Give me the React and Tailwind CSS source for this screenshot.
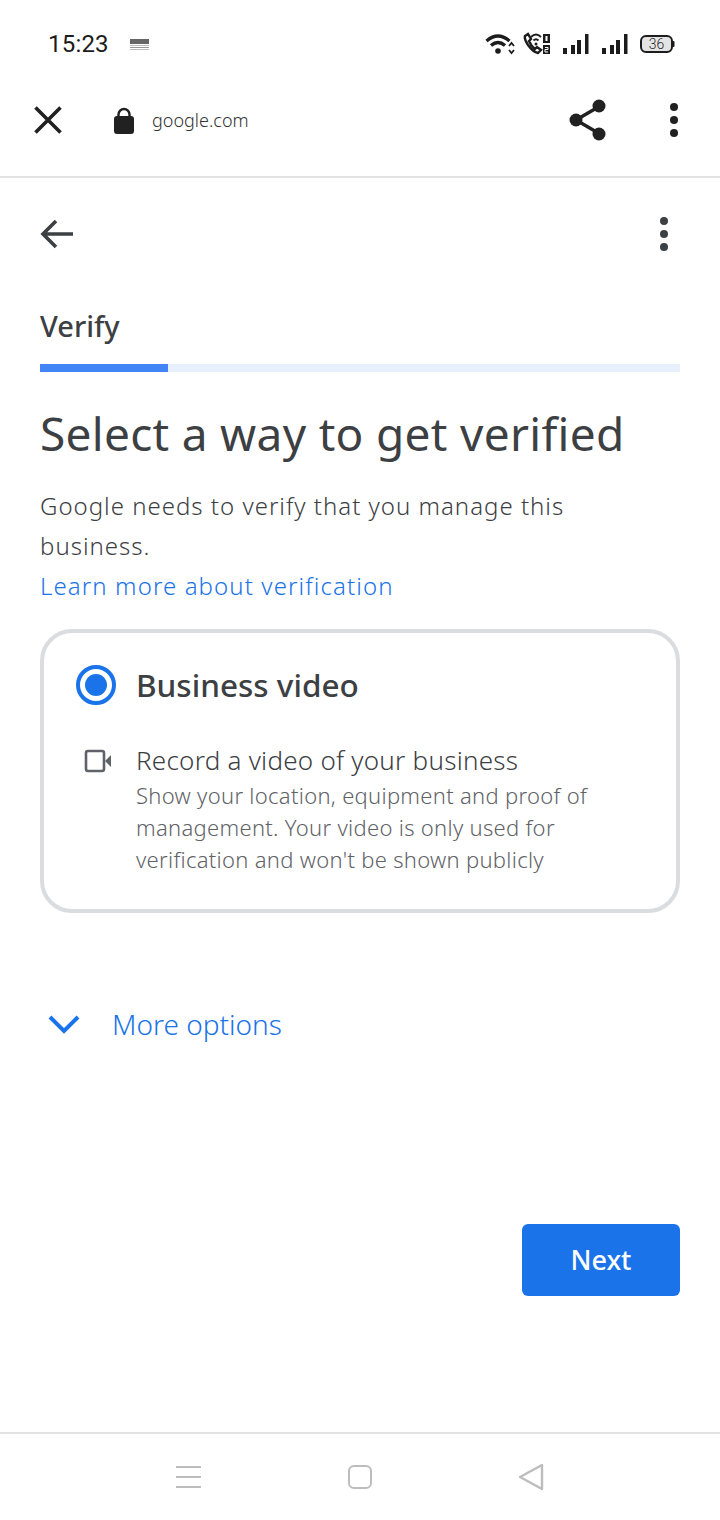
import React from 'react';

const hand = 'font-["Noto_Sans",sans-serif] font-light';
const head = 'font-["Noto_Sans",sans-serif]';

const StatusIcons = () => (
  <div className="flex items-center">
    <svg width="30" height="22" viewBox="0 0 30 22" className="mr-[8px]">
      <path d="M1.500 8 Q13 -2 24.500 8" fill="none" stroke="#1c1c1c" strokeWidth="3.400" />
      <path d="M6 12.500 Q13 6.500 20 12.500" fill="none" stroke="#1c1c1c" strokeWidth="3.400" />
      <circle cx="13" cy="18" r="2.800" fill="#1c1c1c" />
      <path d="M24 13 l2.500 -3 2.500 3 M24 17 l2.500 3 2.500 -3" fill="none" stroke="#1c1c1c" strokeWidth="1.800" />
    </svg>
    <svg width="28" height="24" viewBox="0 0 28 24" className="mr-[11px]">
      <path d="M2 4 Q1 7 5 13 Q10 20 15 21 L18 18 L14 15 L12 17 Q8 14 6 9 L8 7 L5 2 Z" fill="none" stroke="#1c1c1c" strokeWidth="2.400" />
      <path d="M8 5 Q13 0 18 5 M10.500 8.500 Q13 6 15.500 8.500" fill="none" stroke="#1c1c1c" strokeWidth="1.800" />
      <circle cx="13" cy="12" r="1.500" fill="#1c1c1c" />
      <rect x="20" y="2" width="7" height="9" fill="#1c1c1c" />
      <rect x="20" y="13" width="7" height="9" fill="#1c1c1c" />
      <rect x="22.500" y="4" width="2" height="5" fill="#fff" />
      <path d="M22 15.500 h3 v2 h-3 v2.500 h3" fill="none" stroke="#fff" strokeWidth="1" />
    </svg>
    {[0, 1].map((i) => (
      <svg key={i} width="27" height="22" viewBox="0 0 27 22" className="mr-[12px]">
        <rect x="1" y="15" width="4" height="6" fill="#1c1c1c" />
        <rect x="9" y="12" width="4" height="9" fill="#1c1c1c" />
        <rect x="15" y="7" width="4" height="14" fill="#1c1c1c" />
        <rect x="23" y="1" width="3.500" height="20" fill="#1c1c1c" />
      </svg>
    ))}
    <svg width="35" height="20" viewBox="0 0 35 20">
      <rect x="1" y="2" width="31" height="16" rx="5" fill="#e4e4e4" stroke="#1c1c1c" strokeWidth="2" />
      <rect x="32.500" y="7" width="2" height="6" rx="1" fill="#1c1c1c" />
      <text x="16.500" y="15" textAnchor="middle" fontSize="14" fontFamily="Roboto, sans-serif" fontWeight="300" fill="#1c1c1c">36</text>
    </svg>
  </div>
);

const App = () => {
  return (
    <div className="w-[720px] h-[1520px] bg-white flex flex-col overflow-hidden font-['Roboto',sans-serif]">
      {/* status bar */}
      <div className="h-[88px] flex items-center justify-between pl-[48px] pr-[45px]">
        <div className="flex items-center">
          <span className="text-[24px] text-[#1c1c1c] tracking-[0.2px]">15:23</span>
          <div className="ml-[21px] w-[19px] flex flex-col gap-[1px]">
            <div className="h-[5px] bg-[#666]" />
            <div className="h-[1px] bg-[#bbb]" />
            <div className="h-[1px] bg-[#999]" />
            <div className="h-[1px] bg-[#bbb]" />
          </div>
        </div>
        <StatusIcons />
      </div>

      {/* browser toolbar */}
      <div className="h-[90px] shrink-0 border-b-2 border-[#e2e2e2] flex items-start pt-[1px] pl-[34px] pr-[42px]">
        <div className="h-[62px] flex items-center w-full">
          <svg width="28" height="28" viewBox="0 0 28 28">
            <path d="M1.500 1.500 L26.500 26.500 M26.500 1.500 L1.500 26.500" stroke="#212121" strokeWidth="3.600" />
          </svg>
          <svg width="22" height="27" viewBox="0 0 22 27" className="ml-[51px]">
            <path d="M5.500 11 V7.500 a5.500 5.500 0 0 1 11 0 V11" fill="none" stroke="#212121" strokeWidth="2.400" />
            <rect x="1" y="9" width="20" height="18" rx="3" fill="#212121" />
          </svg>
          <span className={`ml-[17px] text-[18px] text-[#333] ${hand}`}>google.com</span>
          <svg width="38" height="42" viewBox="0 0 38 42" className="ml-auto mr-[63px]">
            <path d="M7 21 L31 7 M7 21 L31 35" stroke="#212121" strokeWidth="3.400" />
            <circle cx="7" cy="21" r="6.500" fill="#212121" />
            <circle cx="30" cy="7" r="6.500" fill="#212121" />
            <circle cx="30" cy="35" r="6.500" fill="#212121" />
          </svg>
          <div className="flex flex-col gap-[5px]">
            <div className="w-[8px] h-[8px] rounded-full bg-[#212121]" />
            <div className="w-[8px] h-[8px] rounded-full bg-[#212121]" />
            <div className="w-[8px] h-[8px] rounded-full bg-[#212121]" />
          </div>
        </div>
      </div>

      {/* page */}
      <div className="flex-1 flex flex-col px-[40px]">
        <div className="h-[32px] mt-[40px] flex items-center justify-between pr-[12px]">
          <svg width="34" height="30" viewBox="0 0 34 30">
            <path d="M33 15 H3 M16 2 L3 15 L16 28" fill="none" stroke="#3c4043" strokeWidth="3.600" />
          </svg>
          <div className="flex flex-col gap-[5px]">
            <div className="w-[8px] h-[8px] rounded-full bg-[#3c4043]" />
            <div className="w-[8px] h-[8px] rounded-full bg-[#3c4043]" />
            <div className="w-[8px] h-[8px] rounded-full bg-[#3c4043]" />
          </div>
        </div>

        <div className={`mt-[58px] text-[29px] leading-[36px] font-medium text-[#3c4043] ${head}`}>Verify</div>
        <div className="mt-[20px] h-[8px] bg-[#e8f0fe]">
          <div className="h-full w-[128px] bg-[#4285f4]" />
        </div>

        <h1 className={`mt-[32px] text-[46px] leading-[58px] tracking-[0.3px] text-[#3c4043] ${head}`}>Select a way to get verified</h1>

        <p className={`mt-[24px] w-[540px] text-[24px] leading-[40px] text-[#3c4043] tracking-[1px] ${hand}`}>
          Google needs to verify that you manage this business.
        </p>
        <a className={`text-[24px] leading-[40px] text-[#1a73e8] tracking-[1.1px] ${hand}`}>Learn more about verification</a>

        <div className="mt-[23px] h-[284px] rounded-[32px] border-4 border-[#dadce0] pl-[32px] pr-[24px] pt-[30px]">
          <div className="flex items-center h-[44px]">
            <div className="w-[40px] h-[40px] rounded-full border-4 border-[#1a73e8] flex items-center justify-center">
              <div className="w-[22px] h-[22px] rounded-full bg-[#1a73e8]" />
            </div>
            <span className={`ml-[20px] text-[31.5px] font-medium text-[#3c4043] ${head}`}>Business video</span>
          </div>
          <div className="flex mt-[35px]">
            <svg width="28" height="24" viewBox="0 0 28 24" className="ml-[8px] mt-[7px] shrink-0">
              <rect x="2" y="2" width="18" height="20" rx="2" fill="none" stroke="#5f6368" strokeWidth="2.600" />
              <path d="M21 12 L27 6 V18 Z" fill="#5f6368" />
            </svg>
            <div className="ml-[24px] w-[470px]">
              <div className={`text-[26px] leading-[37px] text-[#3c4043] tracking-[0.25px] ${hand}`}>Record a video of your business</div>
              <div className={`text-[22px] leading-[32px] text-[#5f6368] tracking-[0.3px] ${hand}`}>
                Show your location, equipment and proof of management. Your video is only used for verification and won't be shown publicly
              </div>
            </div>
          </div>
        </div>

        <div className="mt-[91px] flex items-center pl-[8px]">
          <svg width="32" height="20" viewBox="0 0 32 20">
            <path d="M2 3 L16 17 L30 3" fill="none" stroke="#1a73e8" strokeWidth="4" />
          </svg>
          <span className={`ml-[32px] text-[28px] leading-[40px] text-[#1a73e8] ${hand}`}>More options</span>
        </div>

        <div className="mt-[180px] flex justify-end">
          <button className={`w-[158px] h-[72px] rounded-[6px] bg-[#1a73e8] text-white text-[27px] font-medium ${head}`}>Next</button>
        </div>
      </div>

      {/* nav bar */}
      <div className="h-[88px] shrink-0 border-t-2 border-[#e2e2e2] flex items-center justify-between pl-[176px] pr-[176px]">
        <div className="flex flex-col gap-[8px] w-[25px]">
          <div className="h-[2px] bg-[#bdbdbd]" />
          <div className="h-[2px] bg-[#bdbdbd]" />
          <div className="h-[2px] bg-[#bdbdbd]" />
        </div>
        <div className="w-[24px] h-[24px] rounded-[6px] border-2 border-[#bdbdbd]" />
        <svg width="26" height="28" viewBox="0 0 26 28">
          <path d="M24 2 V26 L2 14 Z" fill="none" stroke="#bdbdbd" strokeWidth="2.400" strokeLinejoin="round" />
        </svg>
      </div>
    </div>
  );
};

export default App;
